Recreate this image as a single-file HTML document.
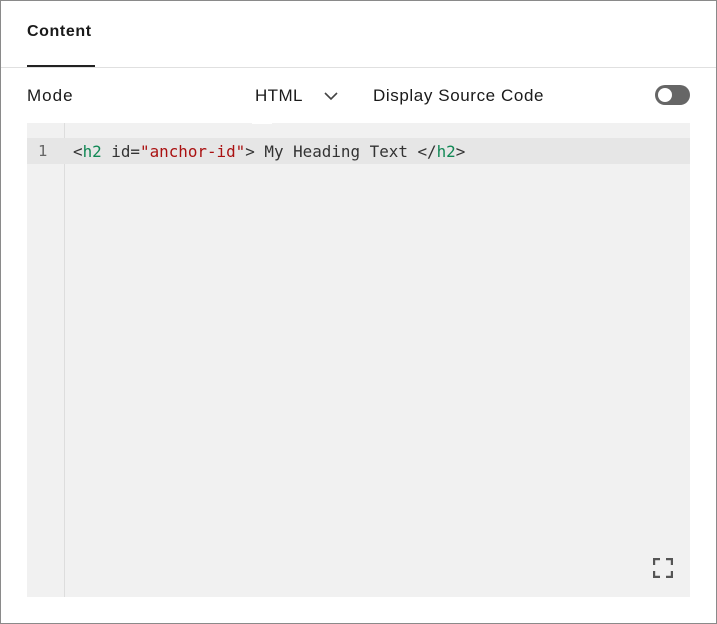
<!DOCTYPE html>
<html><head><style>
body{margin:0;width:717px;height:624px;overflow:hidden;background:#fff;font-family:"Liberation Sans",sans-serif;}
.frame{position:absolute;left:0;top:0;width:715px;height:622px;border:1px solid #8a8a8a;}
.t{position:absolute;color:#1a1a1a;white-space:nowrap;}
</style></head><body>
<div class="frame"></div>
<div class="t" style="left:27px;top:23px;font-size:16px;font-weight:bold;letter-spacing:0.6px">Content</div>
<div style="position:absolute;left:27px;top:65px;width:68px;height:2px;background:#222"></div>
<div style="position:absolute;left:1px;top:67px;width:715px;height:1px;background:#e0e0e0"></div>
<div class="t" style="left:27px;top:86px;font-size:17px;letter-spacing:1px">Mode</div>
<div class="t" style="left:255px;top:86px;font-size:17px;letter-spacing:0.4px">HTML</div>
<svg style="position:absolute;left:323px;top:90px" width="16" height="12"><path d="M2 3 L8 9 L14 3" fill="none" stroke="#444" stroke-width="1.6"/></svg>
<div class="t" style="left:373px;top:86px;font-size:17px;letter-spacing:0.6px">Display Source Code</div>
<div style="position:absolute;left:655px;top:85px;width:35px;height:20px;border-radius:10px;background:#666"></div>
<div style="position:absolute;left:658px;top:88px;width:14px;height:14px;border-radius:7px;background:#fff"></div>
<div style="position:absolute;left:27px;top:123px;width:663px;height:474px;background:#f1f1f1"></div>
<div style="position:absolute;left:64px;top:123px;width:1px;height:474px;background:#ddd"></div>
<div style="position:absolute;left:27px;top:138px;width:663px;height:26px;background:#e6e6e6"></div>
<div style="position:absolute;left:252px;top:123px;width:20px;height:1px;background:#fff"></div>
<div class="t" style="left:38px;top:142px;font-family:'DejaVu Sans Mono',monospace;font-size:15.5px;color:#666">1</div>
<div class="t" style="left:73px;top:142px;font-family:'DejaVu Sans Mono',monospace;font-size:15.9px;color:#333">&lt;<span style="color:#118855">h2</span> id=<span style="color:#aa1111">"anchor-id"</span>&gt; My Heading Text &lt;/<span style="color:#118855">h2</span>&gt;</div>
<svg style="position:absolute;left:653px;top:558px" width="20" height="20"><path d="M1 7V1H7M13 1H19V7M19 13V19H13M7 19H1V13" fill="none" stroke="#555" stroke-width="2.4"/></svg>
</body></html>
